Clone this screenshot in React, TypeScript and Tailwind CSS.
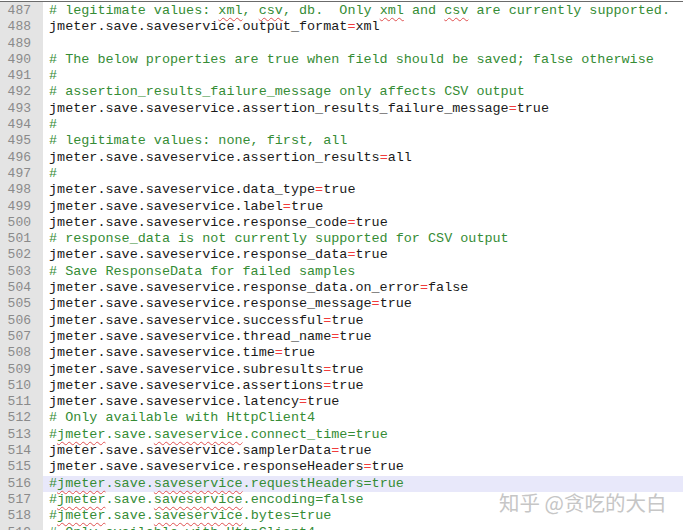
const lines: string[] = [
  "# legitimate values: xml, csv, db.  Only xml and csv are currently supported.",
  "jmeter.save.saveservice.output_format=xml",
  "",
  "# The below properties are true when field should be saved; false otherwise",
  "#",
  "# assertion_results_failure_message only affects CSV output",
  "jmeter.save.saveservice.assertion_results_failure_message=true",
  "#",
  "# legitimate values: none, first, all",
  "jmeter.save.saveservice.assertion_results=all",
  "#",
  "jmeter.save.saveservice.data_type=true",
  "jmeter.save.saveservice.label=true",
  "jmeter.save.saveservice.response_code=true",
  "# response_data is not currently supported for CSV output",
  "jmeter.save.saveservice.response_data=true",
  "# Save ResponseData for failed samples",
  "jmeter.save.saveservice.response_data.on_error=false",
  "jmeter.save.saveservice.response_message=true",
  "jmeter.save.saveservice.successful=true",
  "jmeter.save.saveservice.thread_name=true",
  "jmeter.save.saveservice.time=true",
  "jmeter.save.saveservice.subresults=true",
  "jmeter.save.saveservice.assertions=true",
  "jmeter.save.saveservice.latency=true",
  "# Only available with HttpClient4",
  "#jmeter.save.saveservice.connect_time=true",
  "jmeter.save.saveservice.samplerData=true",
  "jmeter.save.saveservice.responseHeaders=true",
  "#jmeter.save.saveservice.requestHeaders=true",
  "#jmeter.save.saveservice.encoding=false",
  "#jmeter.save.saveservice.bytes=true",
  "# Only available with HttpClient4",
];

const FIRST = 487;
const CURRENT = 516;

// words the spell checker flags inside comments
const Comment = ({ text }: { text: string }) => (
  <span className="text-[#358c35]">
    {text.split(/(xml|csv|jmeter|saveservice)/).map((part, i) =>
      i % 2 === 1 ? (
        <span
          key={i}
          className="underline decoration-wavy decoration-[#e05050] decoration-1 underline-offset-[3px]"
        >
          {part}
        </span>
      ) : (
        part
      ),
    )}
  </span>
);

const Code = ({ text }: { text: string }) => {
  if (text.startsWith("#")) return <Comment text={text} />;
  const eq = text.indexOf("=");
  if (eq < 0) return <span>{text}</span>;
  return (
    <span className="text-[#1a1a1a]">
      {text.slice(0, eq)}
      <span className="text-[#f03c3c]">=</span>
      {text.slice(eq + 1)}
    </span>
  );
};

export default function App() {
  return (
    <div className="relative w-[684px] h-[530px] overflow-hidden bg-white pt-[1px]">
      <div className="border-t border-[#6b6b6b] w-[683px] flex">
        <div className="w-[43px] bg-[#e4e4e4] pt-[1px] shrink-0">
          {lines.map((_, i) => (
            <div
              key={i}
              className="h-[16.3px] leading-[16.3px] pr-[12px] text-right text-[#8a8a8a] text-[13px] font-['Liberation_Mono',monospace] whitespace-pre"
            >
              {FIRST + i}
            </div>
          ))}
        </div>
        <div className="flex-1 pt-[1px]">
          {lines.map((line, i) => (
            <div
              key={i}
              className={`h-[16.3px] leading-[16.3px] pl-[6px] text-[13.45px] font-['Liberation_Mono',monospace] whitespace-pre ${
                FIRST + i === CURRENT ? "bg-[#e8e8fa]" : ""
              }`}
            >
              <Code text={line} />
            </div>
          ))}
        </div>
      </div>
      <div className="absolute left-[499px] top-[490px] text-[20.5px] leading-[24px] text-[#c6c6c6] font-['Noto_Sans_CJK_SC',sans-serif] whitespace-pre [text-shadow:0_0_2px_#ffffff]">
        知乎 @贪吃的大白
      </div>
    </div>
  );
}
